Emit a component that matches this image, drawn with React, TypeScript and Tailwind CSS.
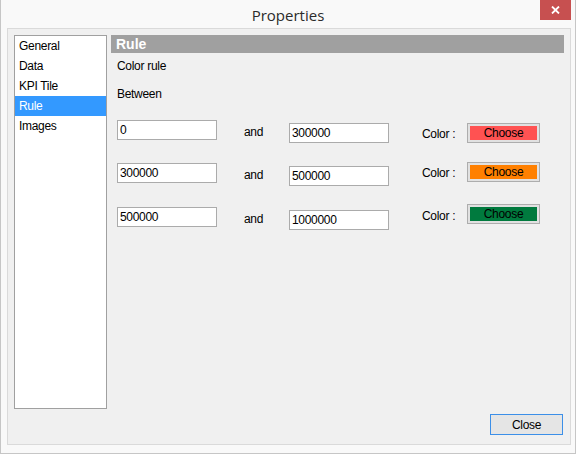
import React from "react";

const font = { fontFamily: '"Liberation Sans", Arial, sans-serif' };

const pages = ["General", "Data", "KPI Tile", "Rule", "Images"];

const rules = [
  { from: "0", to: "300000", color: "bg-[#ff5252]", mt: "mt-0", inputOff: "mt-[3px]", andOff: "mt-[6px]", colorOff: "mt-[8px]", btnOff: "mt-[3px]" },
  { from: "300000", to: "500000", color: "bg-[#ff8000]", mt: "mt-[20px]", inputOff: "mt-[3px]", andOff: "mt-[6px]", colorOff: "mt-[4px]", btnOff: "-mt-[1px]" },
  { from: "500000", to: "1000000", color: "bg-[#007a3e]", mt: "mt-[21px]", inputOff: "mt-[3px]", andOff: "mt-[6px]", colorOff: "mt-[3px]", btnOff: "-mt-[3px]" },
];

function TextBox({ value, className = "" }: { value: string; className?: string }) {
  return (
    <div className={`flex h-[20px] w-[100px] flex-none items-center border border-[#ababab] bg-white pl-[2px] text-[12px] text-black ${className}`}>
      {value}
    </div>
  );
}

function ColorButton({ color, className = "" }: { color: string; className?: string }) {
  return (
    <div className={`flex h-[20px] w-[73px] flex-none border border-[#adadad] bg-[#e1e1e1] p-[2px] ${className}`}>
      <div className={`flex flex-1 items-center justify-center text-[12px] text-black ${color}`}>Choose</div>
    </div>
  );
}

export default function App() {
  return (
    <div className="flex h-[454px] w-[576px] flex-col border-x border-b border-[#c6c6c6] bg-[#f9f9f9]" style={font}>
      <div className="relative flex h-[28px] flex-none items-center justify-center">
        <span className="mt-[2px] text-[15px] text-[#2b2b2b]" style={{ fontFamily: '"Open Sans", "Noto Sans", sans-serif' }}>
          Properties
        </span>
        <div className="absolute right-[4px] top-0 flex h-[20px] w-[31px] items-center justify-center bg-[#c75050]">
          <svg width="9" height="8" viewBox="0 0 9 8">
            <path d="M1 0.5 L8 7.5 M8 0.5 L1 7.5" stroke="white" strokeWidth="1.8" />
          </svg>
        </div>
      </div>

      <div className="ml-[6px] flex h-[417px] w-[564px] flex-none flex-col border border-[#dadada] bg-[#f0f0f0] px-[6px] pt-[6px] text-[11px] tracking-[-0.3px] text-black">
        <div className="flex h-[374px] flex-none">
          <div className="flex w-[93px] flex-none flex-col border border-[#a0a0a0] bg-white">
            {pages.map((p) => (
              <div
                key={p}
                className={`flex h-[20px] flex-none items-center pl-[4px] text-[12px] ${p === "Rule" ? "bg-[#3399ff] text-white" : "text-black"}`}
              >
                {p}
              </div>
            ))}
          </div>

          <div className="ml-[4px] flex flex-1 flex-col">
            <div className="flex h-[18px] flex-none items-center bg-[#a0a0a0] pl-[5px] text-[14px] font-bold tracking-normal text-white">
              Rule
            </div>
            <div className="mt-[7px] pl-[6px] text-[12px] leading-[13px]">Color rule</div>
            <div className="mt-[15px] pl-[6px] text-[12px] leading-[13px]">Between</div>

            <div className="mt-[19px] flex flex-col pl-[6px]">
              {rules.map((r) => (
                <div key={r.from} className={`flex items-start ${r.mt}`}>
                  <TextBox value={r.from} />
                  <span className={`ml-[27px] w-[45px] flex-none text-[12px] leading-[13px] ${r.andOff}`}>and</span>
                  <TextBox value={r.to} className={r.inputOff} />
                  <span className={`ml-[33px] w-[45px] flex-none text-[12px] leading-[13px] ${r.colorOff}`}>Color :</span>
                  <ColorButton color={r.color} className={r.btnOff} />
                </div>
              ))}
            </div>
          </div>
        </div>

        <div className="mt-[5px] mr-[1px] flex h-[21px] w-[73px] items-center justify-center self-end border border-[#3c8fe8] bg-[#e5e5e5] text-[12px]">
          Close
        </div>
      </div>
    </div>
  );
}
